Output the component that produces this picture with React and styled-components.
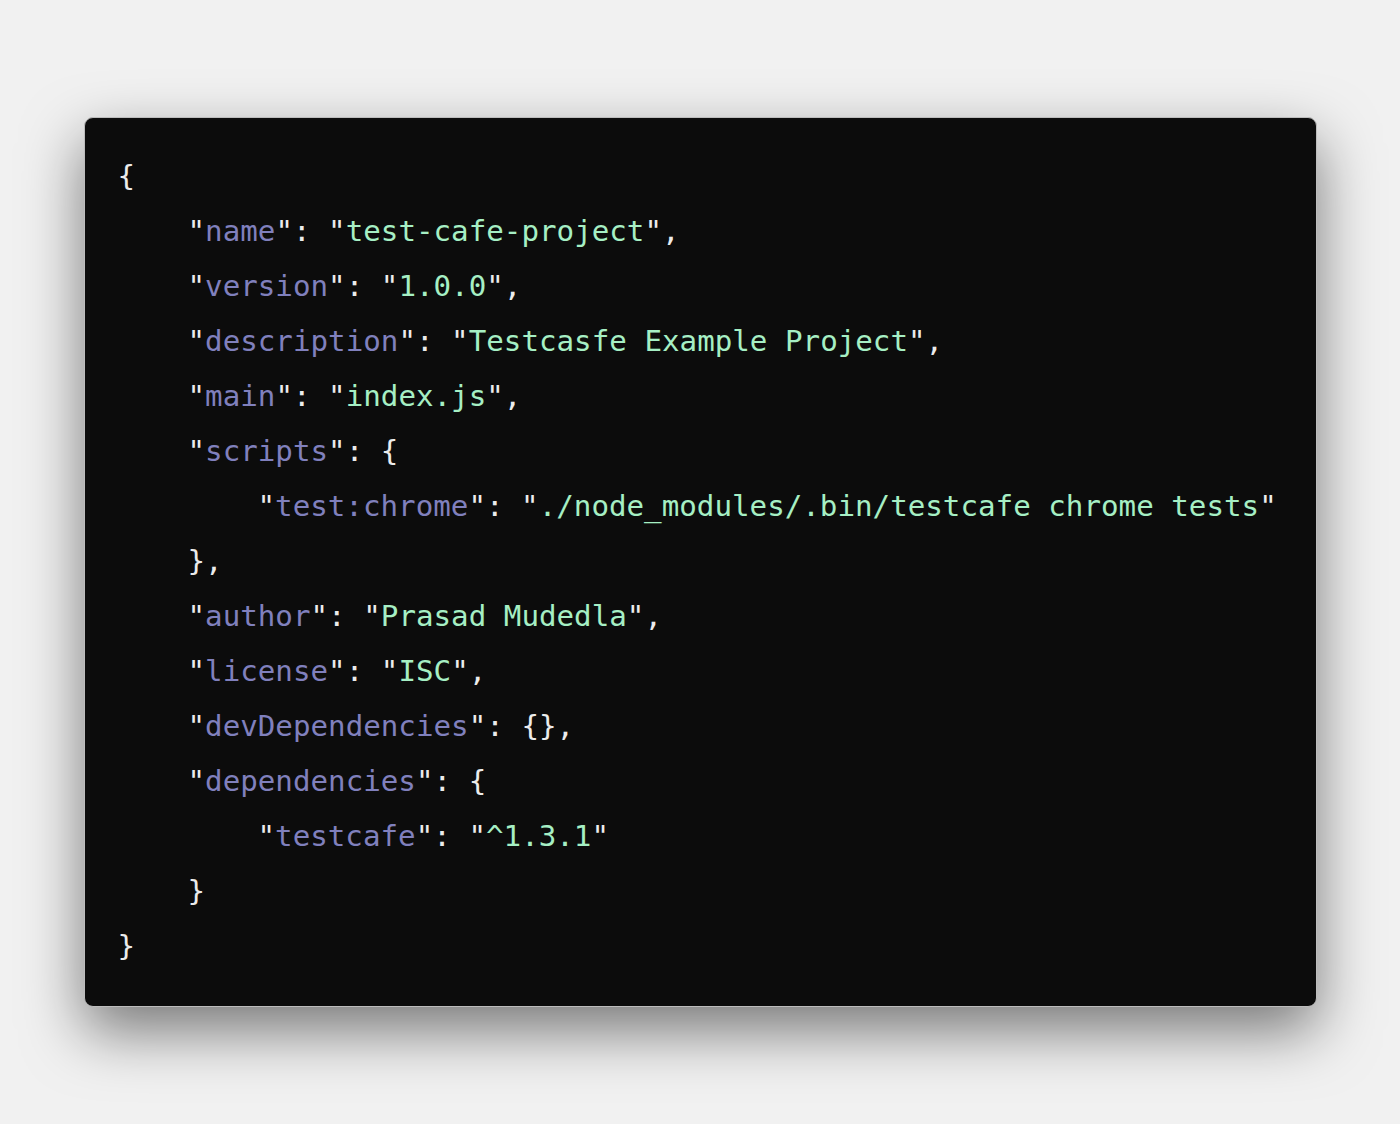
import React from "react";
import styled, { createGlobalStyle } from "styled-components";

const Global = createGlobalStyle`
  html, body { margin: 0; padding: 0; background: #f1f1f1; }
  body { min-height: 1124px; }
`;

const Page = styled.div`
  display: flex;
  justify-content: center;
  padding-top: 117px;
`;

const Card = styled.pre`
  box-sizing: border-box;
  width: 1233px;
  height: 890px;
  margin: 0;
  padding: 31px 30px 32px 33px;
  background: #0c0c0c;
  border: 1px solid #bdbdbd;
  border-radius: 9px;
  box-shadow: 0 24px 60px rgba(0, 0, 0, 0.5);
  font-family: "DejaVu Sans Mono", "Liberation Mono", monospace;
  font-size: 29.2px;
  line-height: 55px;
  color: #ececec;
  white-space: pre;
`;

const Line = styled.div`
  padding-left: ${(p) => p.$indent * 70}px;
  height: 55px;
`;

const Key = styled.span`
  color: #8080bd;
`;

const Str = styled.span`
  color: #a6efc4;
`;

const Punc = styled.span`
  color: #ececec;
`;

const K = ({ children }) => (
  <>
    <Punc>"</Punc>
    <Key>{children}</Key>
    <Punc>"</Punc>
  </>
);

const S = ({ children }) => (
  <>
    <Punc>"</Punc>
    <Str>{children}</Str>
    <Punc>"</Punc>
  </>
);

export default function App() {
  return (
    <>
      <Global />
      <Page>
        <Card>
          <Line $indent={0}>{"{"}</Line>
          <Line $indent={1}><K>name</K>: <S>test-cafe-project</S>,</Line>
          <Line $indent={1}><K>version</K>: <S>1.0.0</S>,</Line>
          <Line $indent={1}><K>description</K>: <S>Testcasfe Example Project</S>,</Line>
          <Line $indent={1}><K>main</K>: <S>index.js</S>,</Line>
          <Line $indent={1}><K>scripts</K>: {"{"}</Line>
          <Line $indent={2}><K>test:chrome</K>: <S>./node_modules/.bin/testcafe chrome tests</S></Line>
          <Line $indent={1}>{"},"}</Line>
          <Line $indent={1}><K>author</K>: <S>Prasad Mudedla</S>,</Line>
          <Line $indent={1}><K>license</K>: <S>ISC</S>,</Line>
          <Line $indent={1}><K>devDependencies</K>: {"{},"}</Line>
          <Line $indent={1}><K>dependencies</K>: {"{"}</Line>
          <Line $indent={2}><K>testcafe</K>: <S>^1.3.1</S></Line>
          <Line $indent={1}>{"}"}</Line>
          <Line $indent={0}>{"}"}</Line>
        </Card>
      </Page>
    </>
  );
}
